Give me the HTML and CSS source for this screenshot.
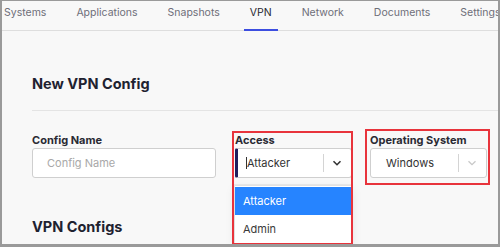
FILE: index.html
```html
<!DOCTYPE html>
<html>
<head>
<meta charset="utf-8">
<link rel="stylesheet" href="styles.css">
</head>
<body>
<div class="frame">
  <nav class="tabs">
    <span class="tab">Systems</span>
    <span class="tab">Applications</span>
    <span class="tab">Snapshots</span>
    <span class="tab active">VPN</span>
    <span class="tab">Network</span>
    <span class="tab">Documents</span>
    <span class="tab">Settings</span>
  </nav>
  <main class="content">
    <h2 class="heading">New VPN Config</h2>
    <div class="divider"></div>
    <div class="form-row">
      <div class="field field-name">
        <label class="label">Config Name</label>
        <div class="input placeholder">Config Name</div>
      </div>
      <div class="field field-access">
        <label class="label">Access</label>
        <div class="select focused">
          <span class="value"><span class="caret"></span>Attacker</span>
          <span class="sep"></span>
          <svg class="chev dark" width="10" height="10" viewBox="0 0 10 10"><path d="M1.5 3.2 L5 6.7 L8.5 3.2" fill="none" stroke="#333" stroke-width="1.6"/></svg>
        </div>
        <div class="menu">
          <div class="option selected">Attacker</div>
          <div class="option">Admin</div>
        </div>
        <div class="mark mark-access"></div>
      </div>
      <div class="field field-os">
        <label class="label">Operating System</label>
        <div class="select">
          <span class="value os">Windows</span>
          <span class="sep"></span>
          <svg class="chev" width="10" height="10" viewBox="0 0 10 10"><path d="M1.5 3.2 L5 6.7 L8.5 3.2" fill="none" stroke="#c8c8c8" stroke-width="1.3"/></svg>
        </div>
        <div class="mark mark-os"></div>
      </div>
    </div>
    <h2 class="heading second">VPN Configs</h2>
  </main>
</div>
</body>
</html>
```
FILE: styles.css
```css
* { box-sizing: border-box; }
html, body { margin: 0; padding: 0; }
body {
  width: 500px;
  height: 247px;
  overflow: hidden;
  font-family: Inter, "Liberation Sans", sans-serif;
  background: #f8f8f8;
}
.frame {
  width: 500px;
  height: 247px;
  border-style: solid;
  border-color: #9a9a9a;
  border-width: 1px 2px 3px 2px;
  background: #f8f8f8;
  overflow: hidden;
}
.tabs {
  display: flex;
  gap: 30px;
  height: 30px;
  padding-left: 2px;
  border-bottom: 1px solid #dedede;
  white-space: nowrap;
}
.tab {
  font-size: 10.5px;
  color: #6e6e78;
  line-height: 24px;
  position: relative;
}
.tab.active {
  color: #2a2a33;
  padding: 0 6px;
  margin: 0 -6px;
}
.tab.active::after {
  content: "";
  position: absolute;
  left: 0;
  right: 0;
  bottom: -1px;
  height: 2px;
  background: #3d4ee0;
}
.content {
  padding-left: 30px;
}
.heading {
  margin: 0;
  font-size: 14.5px;
  font-weight: 700;
  color: #1e2230;
  line-height: 18px;
  padding-top: 44px;
}
.divider {
  height: 1px;
  background: #e4e4e4;
  margin-top: 17px;
}
.form-row {
  display: flex;
  margin-top: 22px;
  position: relative;
}
.field { position: relative; }
.field-name { width: 184px; margin-right: 19px; }
.field-access { width: 117px; margin-right: 18px; }
.field-os { width: 117px; }
.label {
  display: block;
  font-size: 11px;
  font-weight: 700;
  color: #2a2a33;
  line-height: 14px;
  height: 15px;
}
.input, .select {
  height: 30px;
  background: #fff;
  border: 1px solid #cfcfcf;
  border-radius: 3px;
  font-size: 11px;
  display: flex;
  align-items: center;
}
.input.placeholder {
  color: #a8a8a8;
  padding-left: 14px;
}
.select .value {
  flex: 1;
  color: #333;
  padding-left: 8px;
  display: flex;
  align-items: center;
}
.select .value.os { padding-left: 15px; }
.select.focused {
  border-left: 3px solid #1f1d5c;
  border-radius: 2px 3px 3px 2px;
}
.caret {
  display: inline-block;
  width: 1px;
  height: 12px;
  background: #333;
}
.sep {
  width: 1px;
  height: 18px;
  background: #d4d4d4;
}
.chev { margin: 0 9px 0 8px; }
.menu {
  position: absolute;
  left: 0;
  right: 0;
  top: 52px;
  background: #fff;
  border-top: 1px solid #e2e2e2;
  padding-top: 1px;
  box-shadow: 0 0 0 1px rgba(0,0,0,0.05), 0 4px 10px rgba(0,0,0,0.1);
  z-index: 2;
}
.option {
  height: 28px;
  line-height: 28px;
  font-size: 11px;
  color: #3a3a3a;
  padding-left: 8px;
}
.option.selected {
  background: #2684ff;
  color: #fff;
}
.mark {
  position: absolute;
  border: 2px solid #e8343c;
  z-index: 3;
  pointer-events: none;
}
.mark-access {
  left: -3px;
  right: -1px;
  top: -2px;
  height: 114px;
}
.mark-os {
  left: -5px;
  right: -3px;
  top: -4px;
  height: 56px;
}
.heading.second {
  padding-top: 40px;
}
```
